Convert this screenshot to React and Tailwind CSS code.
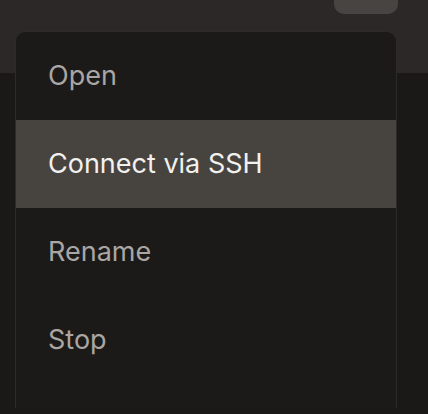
export default function App() {
  const items = ['Open', 'Connect via SSH', 'Rename', 'Stop'];
  return (
    <div className="h-[414px] w-[428px] overflow-hidden bg-[#1a1918] font-['Inter',sans-serif]">
      {/* Top bar */}
      <div className="relative h-[73px] bg-[#2b2827]">
        <div className="absolute right-[30px] top-0 h-[14px] w-[64px] rounded-b-[10px] bg-[#474441]" />
      </div>
      {/* Menu */}
      <div className="relative -mt-[42px] ml-[15px] w-[382px] rounded-t-[10px] border border-b-0 border-[#2d2b2a] bg-[#1c1a19] pb-6">
        {items.map((label, i) => (
          <div
            key={label}
            className={
              i === 1
                ? 'flex h-[88px] items-center bg-[#474440] pl-[32px] text-[27px] text-[#f2f1ef]'
                : 'flex h-[88px] items-center pl-[32px] text-[27px] text-[#a9a6a3]'
            }
          >
            {label}
          </div>
        ))}
      </div>
    </div>
  );
}
